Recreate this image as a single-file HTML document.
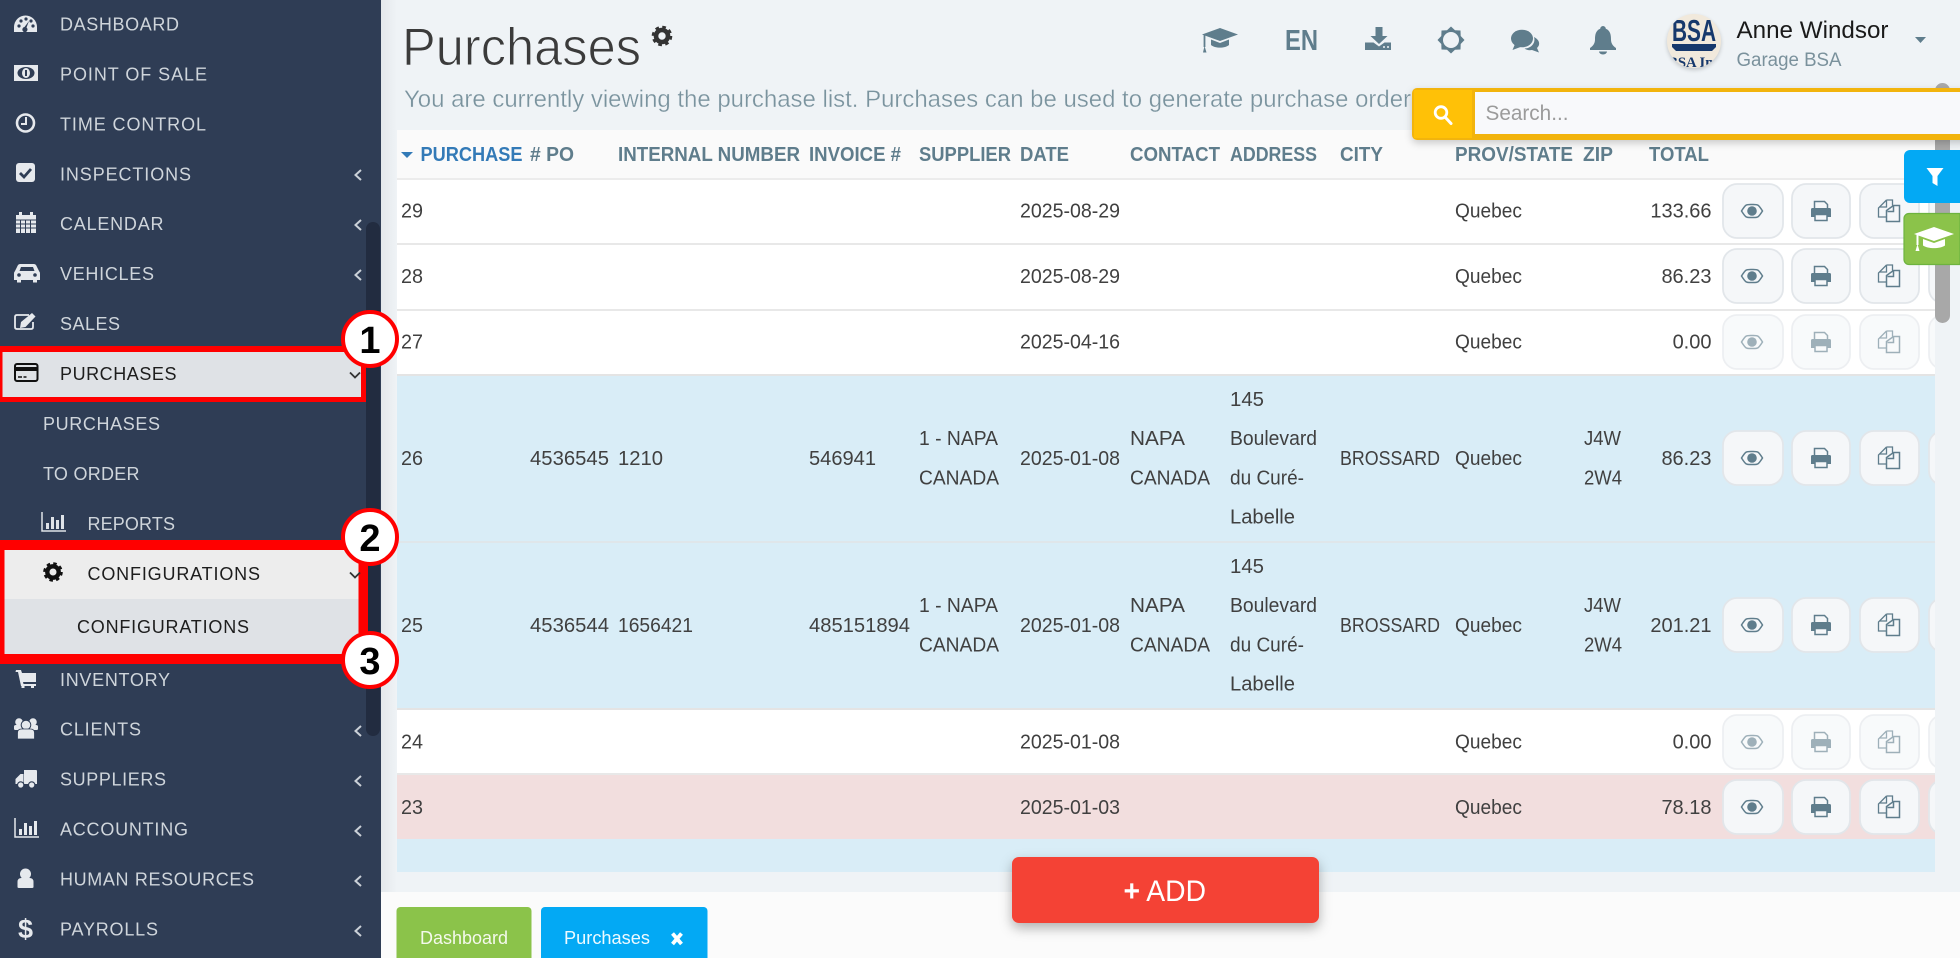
<!DOCTYPE html>
<html lang="en"><head><meta charset="utf-8"><title>Purchases</title>
<style>
html,body{margin:0;padding:0;width:1960px;height:958px;overflow:hidden;background:#eff3f6}
svg{display:block}
text{font-family:"Liberation Sans",sans-serif}
.s{font-size:18px;fill:#cfd5db}
.a{font-size:18px;fill:#1d1d1d}
.h{font-size:20px;font-weight:bold;fill:#5f7d8c}
.d{font-size:20px;fill:#404040}
.n{font-size:38px;font-weight:bold;fill:#000;text-anchor:middle;font-family:"Liberation Sans",sans-serif}
</style></head><body>
<svg xmlns="http://www.w3.org/2000/svg" width="1960" height="958" viewBox="0 0 1960 958">
<defs>
<linearGradient id="sh" x1="0" x2="1" y1="0" y2="0"><stop offset="0" stop-color="#e4e8eb"/><stop offset="1" stop-color="#eff3f6"/></linearGradient>
<filter id="ds" x="-20%" y="-30%" width="140%" height="170%"><feDropShadow dx="0" dy="5" stdDeviation="6" flood-color="#000" flood-opacity=".3"/></filter>
<filter id="ds2" x="-10%" y="-30%" width="120%" height="170%"><feDropShadow dx="0" dy="3" stdDeviation="4" flood-color="#000" flood-opacity=".2"/></filter>
<filter id="ds3" x="-30%" y="-30%" width="160%" height="160%"><feGaussianBlur stdDeviation="2"/></filter>
<clipPath id="av"><circle cx="1694" cy="41" r="27"/></clipPath>
<g id="gear"><circle r="6" fill="none" stroke="currentColor" stroke-width="4.6"/><circle r="8.8" fill="none" stroke="currentColor" stroke-width="3" stroke-dasharray="3.6 3.31"/></g>
<g id="eye"><path d="M-10.500 0C-6-7-6-6.500 0-6.500C6-6.500 6-7 10.500 0C6 7 6 6.500 0 6.500C-6 6.500-6 7-10.500 0Z" fill="none" stroke="currentColor" stroke-width="1.500"/><circle r="4.800" fill="currentColor"/></g>
<g id="prn"><path d="M-6.500-3V-9.500H3.500L6.500-6.500V-3" fill="none" stroke="currentColor" stroke-width="1.500"/><path d="M-8.500-3H8.500Q10-3 10-1.500V6H6.500V3H-6.500V6H-10V-1.500Q-10-3-8.500-3Z" fill="currentColor"/><rect x="-6" y="3.500" width="12" height="6" fill="#f5f7f9" stroke="currentColor" stroke-width="1.500"/></g>
<g id="cpy"><path d="M-2.500-11H3.500V-5.500M-2.500-11L-10.500-3V6H-2.500M-2.500-11V-4H-9" fill="none" stroke="currentColor" stroke-width="1.300"/><path d="M4.500-5.500H10.500V10.500H-2.500V-.5ZM4.500-5.500V.5H-1.500" fill="none" stroke="currentColor" stroke-width="1.500"/></g>
<g id="btns">
<rect x="1723" y="-27" width="60" height="54" rx="14" fill="#f5f7f9" stroke="#e2e6ea" stroke-width="1.800"/>
<rect x="1792" y="-27" width="58" height="54" rx="14" fill="#f5f7f9" stroke="#e2e6ea" stroke-width="1.800"/>
<rect x="1860" y="-27" width="59" height="54" rx="14" fill="#f5f7f9" stroke="#e2e6ea" stroke-width="1.800"/>
<rect x="1929" y="-27" width="60" height="54" rx="14" fill="#f5f7f9" stroke="#e2e6ea" stroke-width="1.800"/>
<use href="#eye" x="1752" y="0" color="#5f7d8c"/><use href="#prn" x="1821" y="0" color="#5f7d8c"/><use href="#cpy" x="1889" y="0" color="#5f7d8c"/>
</g>
<g id="cap"><path d="M0-10L20-3L0 4L-20-3Z" fill="currentColor"/><path d="M-11 2V8.500C-6 12 6 12 11 8.500V2L0 6Z" fill="currentColor"/><path d="M-16.500-2V8" stroke="currentColor" stroke-width="2" fill="none"/><path d="M-16.500 7L-18.500 14H-14.500Z" fill="currentColor"/></g>
<path id="cl" d="M3-5L-2.500 0L3 5" fill="none" stroke="#cbd1d8" stroke-width="2"/>
<g id="bars"><path d="M1-10V9H25" fill="none" stroke="currentColor" stroke-width="1.500"/><path d="M5 1h3V7H5zM10-5h3V7h-3zM15-2h3V7h-3zM20-7h3V7h-3z" fill="currentColor"/></g>
</defs>

<!-- content background -->
<rect x="381" y="0" width="1579" height="958" fill="#eff3f6"/>
<rect x="381" y="0" width="16" height="892" fill="url(#sh)"/>
<rect x="381" y="892" width="1579" height="66" fill="#fbfbfb"/>

<!-- title -->
<text x="402" y="65" font-size="53" fill="#3b3b3b" stroke="#eff3f6" stroke-width="1" textLength="239" lengthAdjust="spacingAndGlyphs">Purchases</text>
<use href="#gear" x="662" y="36" color="#333"/>
<text x="404" y="107" font-size="24" fill="#7a939e" stroke="#eff3f6" stroke-width=".3" textLength="1007" lengthAdjust="spacingAndGlyphs">You are currently viewing the purchase list. Purchases can be used to generate purchase order</text>

<!-- table -->
<rect x="397" y="130" width="1538" height="48" fill="#fafafa"/>
<rect x="397" y="178" width="1538" height="2" fill="#ececec"/>
<rect x="397" y="180" width="1538" height="195" fill="#fff"/>
<rect x="397" y="243" width="1538" height="2" fill="#e8e8e8"/>
<rect x="397" y="309" width="1538" height="2" fill="#e8e8e8"/>
<rect x="397" y="374" width="1538" height="335" fill="#d9edf7"/>
<rect x="397" y="374" width="1538" height="2" fill="#e4e4e4"/>
<rect x="397" y="541" width="1538" height="2" fill="#dfe6ea"/>
<rect x="397" y="708" width="1538" height="2" fill="#e4e4e4"/>
<rect x="397" y="710" width="1538" height="64" fill="#fff"/>
<rect x="397" y="773" width="1538" height="66" fill="#f2dede"/>
<rect x="397" y="773" width="1538" height="2" fill="#e8e8e8"/>
<rect x="397" y="839" width="1538" height="33" fill="#d9edf7"/>

<path d="M401 152H413L407 158Z" fill="#337ab7"/>
<text x="420.500" y="161" class="h" style="fill:#337ab7" textLength="102" lengthAdjust="spacingAndGlyphs">PURCHASE</text>
<text x="530" y="161" class="h" textLength="44" lengthAdjust="spacingAndGlyphs"># PO</text>
<text x="618" y="161" class="h" textLength="182" lengthAdjust="spacingAndGlyphs">INTERNAL NUMBER</text>
<text x="809" y="161" class="h" textLength="92" lengthAdjust="spacingAndGlyphs">INVOICE #</text>
<text x="919" y="161" class="h" textLength="92" lengthAdjust="spacingAndGlyphs">SUPPLIER</text>
<text x="1020" y="161" class="h" textLength="49" lengthAdjust="spacingAndGlyphs">DATE</text>
<text x="1130" y="161" class="h" textLength="90" lengthAdjust="spacingAndGlyphs">CONTACT</text>
<text x="1230" y="161" class="h" textLength="87" lengthAdjust="spacingAndGlyphs">ADDRESS</text>
<text x="1340" y="161" class="h" textLength="43" lengthAdjust="spacingAndGlyphs">CITY</text>
<text x="1455" y="161" class="h" textLength="118" lengthAdjust="spacingAndGlyphs">PROV/STATE</text>
<text x="1583" y="161" class="h" textLength="30" lengthAdjust="spacingAndGlyphs">ZIP</text>
<text x="1649" y="161" class="h" textLength="60" lengthAdjust="spacingAndGlyphs">TOTAL</text>

<!-- rows -->
<g class="rows">
<text x="401" y="217.500" class="d" textLength="22" lengthAdjust="spacingAndGlyphs">29</text>
<text x="1020" y="217.500" class="d" textLength="100" lengthAdjust="spacingAndGlyphs">2025-08-29</text>
<text x="1455" y="217.500" class="d" textLength="67" lengthAdjust="spacingAndGlyphs">Quebec</text>
<text x="1711.500" y="217.500" class="d" text-anchor="end">133.66</text>

<text x="401" y="283" class="d" textLength="22" lengthAdjust="spacingAndGlyphs">28</text>
<text x="1020" y="283" class="d" textLength="100" lengthAdjust="spacingAndGlyphs">2025-08-29</text>
<text x="1455" y="283" class="d" textLength="67" lengthAdjust="spacingAndGlyphs">Quebec</text>
<text x="1711.500" y="283" class="d" text-anchor="end">86.23</text>

<text x="401" y="348.500" class="d" textLength="22" lengthAdjust="spacingAndGlyphs">27</text>
<text x="1020" y="348.500" class="d" textLength="100" lengthAdjust="spacingAndGlyphs">2025-04-16</text>
<text x="1455" y="348.500" class="d" textLength="67" lengthAdjust="spacingAndGlyphs">Quebec</text>
<text x="1711.500" y="348.500" class="d" text-anchor="end">0.00</text>

<text x="401" y="465" class="d" textLength="22" lengthAdjust="spacingAndGlyphs">26</text>
<text x="530" y="465" class="d" textLength="79" lengthAdjust="spacingAndGlyphs">4536545</text>
<text x="618" y="465" class="d" textLength="45" lengthAdjust="spacingAndGlyphs">1210</text>
<text x="809" y="465" class="d" textLength="67" lengthAdjust="spacingAndGlyphs">546941</text>
<text x="919" y="445" class="d" textLength="79" lengthAdjust="spacingAndGlyphs">1 - NAPA</text>
<text x="919" y="484.500" class="d" textLength="80" lengthAdjust="spacingAndGlyphs">CANADA</text>
<text x="1020" y="465" class="d" textLength="100" lengthAdjust="spacingAndGlyphs">2025-01-08</text>
<text x="1130" y="445" class="d" textLength="55" lengthAdjust="spacingAndGlyphs">NAPA</text>
<text x="1130" y="484.500" class="d" textLength="80" lengthAdjust="spacingAndGlyphs">CANADA</text>
<text x="1230" y="406" class="d" textLength="34" lengthAdjust="spacingAndGlyphs">145</text>
<text x="1230" y="445" class="d" textLength="87" lengthAdjust="spacingAndGlyphs">Boulevard</text>
<text x="1230" y="484.500" class="d" textLength="74" lengthAdjust="spacingAndGlyphs">du Curé-</text>
<text x="1230" y="523.500" class="d" textLength="65" lengthAdjust="spacingAndGlyphs">Labelle</text>
<text x="1340" y="465" class="d" textLength="100" lengthAdjust="spacingAndGlyphs">BROSSARD</text>
<text x="1455" y="465" class="d" textLength="67" lengthAdjust="spacingAndGlyphs">Quebec</text>
<text x="1584" y="445" class="d" textLength="37" lengthAdjust="spacingAndGlyphs">J4W</text>
<text x="1584" y="484.500" class="d" textLength="38" lengthAdjust="spacingAndGlyphs">2W4</text>
<text x="1711.500" y="465" class="d" text-anchor="end">86.23</text>

<text x="401" y="632" class="d" textLength="22" lengthAdjust="spacingAndGlyphs">25</text>
<text x="530" y="632" class="d" textLength="79" lengthAdjust="spacingAndGlyphs">4536544</text>
<text x="618" y="632" class="d" textLength="75" lengthAdjust="spacingAndGlyphs">1656421</text>
<text x="809" y="632" class="d" textLength="101" lengthAdjust="spacingAndGlyphs">485151894</text>
<text x="919" y="612" class="d" textLength="79" lengthAdjust="spacingAndGlyphs">1 - NAPA</text>
<text x="919" y="651.500" class="d" textLength="80" lengthAdjust="spacingAndGlyphs">CANADA</text>
<text x="1020" y="632" class="d" textLength="100" lengthAdjust="spacingAndGlyphs">2025-01-08</text>
<text x="1130" y="612" class="d" textLength="55" lengthAdjust="spacingAndGlyphs">NAPA</text>
<text x="1130" y="651.500" class="d" textLength="80" lengthAdjust="spacingAndGlyphs">CANADA</text>
<text x="1230" y="573" class="d" textLength="34" lengthAdjust="spacingAndGlyphs">145</text>
<text x="1230" y="612" class="d" textLength="87" lengthAdjust="spacingAndGlyphs">Boulevard</text>
<text x="1230" y="651.500" class="d" textLength="74" lengthAdjust="spacingAndGlyphs">du Curé-</text>
<text x="1230" y="690.500" class="d" textLength="65" lengthAdjust="spacingAndGlyphs">Labelle</text>
<text x="1340" y="632" class="d" textLength="100" lengthAdjust="spacingAndGlyphs">BROSSARD</text>
<text x="1455" y="632" class="d" textLength="67" lengthAdjust="spacingAndGlyphs">Quebec</text>
<text x="1584" y="612" class="d" textLength="37" lengthAdjust="spacingAndGlyphs">J4W</text>
<text x="1584" y="651.500" class="d" textLength="38" lengthAdjust="spacingAndGlyphs">2W4</text>
<text x="1711.500" y="632" class="d" text-anchor="end">201.21</text>

<text x="401" y="748.500" class="d" textLength="22" lengthAdjust="spacingAndGlyphs">24</text>
<text x="1020" y="748.500" class="d" textLength="100" lengthAdjust="spacingAndGlyphs">2025-01-08</text>
<text x="1455" y="748.500" class="d" textLength="67" lengthAdjust="spacingAndGlyphs">Quebec</text>
<text x="1711.500" y="748.500" class="d" text-anchor="end">0.00</text>

<text x="401" y="814" class="d" textLength="22" lengthAdjust="spacingAndGlyphs">23</text>
<text x="1020" y="814" class="d" textLength="100" lengthAdjust="spacingAndGlyphs">2025-01-03</text>
<text x="1455" y="814" class="d" textLength="67" lengthAdjust="spacingAndGlyphs">Quebec</text>
<text x="1711.500" y="814" class="d" text-anchor="end">78.18</text>
<text x="1230" y="871" class="d" textLength="34" lengthAdjust="spacingAndGlyphs">145</text>
</g>

<!-- row buttons -->
<use href="#btns" x="0" y="211"/>
<use href="#btns" x="0" y="276"/>
<use href="#btns" x="0" y="342" opacity=".6"/>
<use href="#btns" x="0" y="458"/>
<use href="#btns" x="0" y="625"/>
<use href="#btns" x="0" y="742" opacity=".6"/>
<use href="#btns" x="0" y="807"/>

<!-- right edge -->
<rect x="1935" y="130" width="25" height="762" fill="#eff3f6"/>
<rect x="1935" y="83" width="15" height="240" rx="7.500" fill="#a8a8a8"/>

<!-- top bar icons -->
<g fill="#5f7d8c">
<path d="M1220 28L1238 34.500L1220 41L1202 34.500Z"/>
<path d="M1211 39.500V45C1215 48.500 1225 48.500 1229 45V39.500L1220 43Z"/>
<path d="M1204.500 35V47" stroke="#5f7d8c" stroke-width="1.800" fill="none"/>
<path d="M1204.500 46L1203 52.500H1206.500Z"/>
</g>
<text x="1285" y="50" font-size="29" font-weight="bold" fill="#5f7d8c" textLength="33" lengthAdjust="spacingAndGlyphs">EN</text>
<g fill="#5f7d8c"><path d="M1375.500 27h7v9h5l-8.500 8-8.500-8h5z"/><path d="M1365 42.500h8.500l5.500 4 5.500-4H1391v7.500h-26z"/><circle cx="1384" cy="47" r="1" fill="#eff3f6"/><circle cx="1388" cy="47" r="1" fill="#eff3f6"/></g>
<path d="M1451 26.500L1455 30.300L1460.500 30.500L1460.700 36L1464.500 40L1460.700 44L1460.500 49.500L1455 49.700L1451 53.500L1447 49.700L1441.500 49.500L1441.300 44L1437.500 40L1441.300 36L1441.500 30.500L1447 30.300Z" fill="#5f7d8c"/>
<circle cx="1451" cy="40" r="8" fill="#eff3f6"/>
<g fill="#5f7d8c"><ellipse cx="1522" cy="38.500" rx="11" ry="8.800"/><path d="M1515 44l-2.500 6 8-3z"/><path d="M1534 37c6 3 6.500 8 3 11l2 4.500-7-2.500c-3 .5-5.500 0-7.500-1.500 6.500 0 11.500-5.500 9.500-11.500z"/></g>
<path d="M1603 26a2.800 2.800 0 0 1 2.800 2.800c4.700 1.700 5.200 6.700 5.200 10.700 0 4 2 6.500 5 8.500v2h-26v-2c3-2 5-4.500 5-8.500 0-4 .5-9 5.200-10.700a2.800 2.800 0 0 1 2.800-2.800zM1599 51.500h8a4 3 0 0 1-8 0z" fill="#5f7d8c"/>

<!-- avatar -->
<circle cx="1694" cy="43" r="27" fill="#000" opacity=".18" filter="url(#ds3)"/>
<g clip-path="url(#av)">
<rect x="1665" y="12" width="60" height="60" fill="#f1e9dc"/>
<text x="1672" y="41" font-size="31" font-weight="bold" fill="#16386c" textLength="44" lengthAdjust="spacingAndGlyphs">BSA</text>
<path d="M1672 44h44v3l-4 4h-36l-4-4z" fill="#16386c"/>
<text x="1668" y="67" font-size="15" font-weight="bold" fill="#16386c" style="font-family:'Liberation Serif',serif" textLength="52" lengthAdjust="spacingAndGlyphs">BSA Inc</text>
</g>
<text x="1736.500" y="38" font-size="24" fill="#1a1a1a" textLength="152" lengthAdjust="spacingAndGlyphs">Anne Windsor</text>
<text x="1736.500" y="66" font-size="19" fill="#7a919c" textLength="105" lengthAdjust="spacingAndGlyphs">Garage BSA</text>
<path d="M1915 37h11l-5.500 6z" fill="#5f7d8c"/>

<!-- search -->
<rect x="1412" y="88" width="560" height="52" rx="5" fill="#f2b40e" filter="url(#ds2)"/>
<rect x="1414" y="90" width="58" height="48" fill="#ffc107"/>
<rect x="1475" y="92" width="490" height="42" fill="#f8f9fb"/>
<circle cx="1441" cy="112.500" r="5.800" fill="none" stroke="#fff" stroke-width="2.800"/>
<path d="M1445 117l6 6.500" stroke="#fff" stroke-width="3" stroke-linecap="round"/>
<text x="1485.500" y="120" font-size="21" fill="#9b9b9b" textLength="83" lengthAdjust="spacingAndGlyphs">Search...</text>

<!-- floating tabs -->
<path d="M1960 150H1910a6 6 0 0 0-6 6v41a6 6 0 0 0 6 6h50z" fill="#03a9f4"/>
<path d="M1926.500 168h17l-6 8v10l-5-3v-7z" fill="#fff"/>
<path d="M1960 213.500H1909a5 5 0 0 0-5 5v41a5 5 0 0 0 5 5h51z" fill="#8bc34a" stroke="#6db33f" stroke-width="1.200"/>
<use href="#cap" x="1934" y="237" color="#fff"/>

<!-- bottom tabs -->
<path d="M396.500 958V911a4 4 0 0 1 4-4H527.500a4 4 0 0 1 4 4V958z" fill="#8bc34a"/>
<text x="420" y="944" font-size="18" fill="#f4f9ec" textLength="88" lengthAdjust="spacingAndGlyphs">Dashboard</text>
<path d="M541 958V911a4 4 0 0 1 4-4H703.500a4 4 0 0 1 4 4V958z" fill="#03a9f4"/>
<text x="564" y="944" font-size="18" fill="#eefaff" textLength="86" lengthAdjust="spacingAndGlyphs">Purchases</text>
<path d="M672.500 933.500l9 10.500M681.500 933.500l-9 10.500" stroke="#fff" stroke-width="3.800"/>

<!-- add -->
<rect x="1012" y="857" width="307" height="66" rx="7" fill="#f44336" filter="url(#ds)"/>
<text x="1123.500" y="901" font-size="30" fill="#fff" textLength="82.500" lengthAdjust="spacingAndGlyphs"><tspan font-weight="bold">+</tspan> ADD</text>

<!-- sidebar -->
<rect x="0" y="0" width="381" height="958" fill="#2f3d55"/>
<rect x="366" y="222" width="14" height="514" rx="7" fill="#222c40"/>

<g color="#e6e9ed">
<path d="M14 32v-5a11.500 11.500 0 0 1 23 0v5z" fill="#e6e9ed"/>
<g fill="#2f3d55"><circle cx="19" cy="26" r="1.600"/><circle cx="21" cy="21" r="1.600"/><circle cx="26" cy="19" r="1.600"/><circle cx="31" cy="21" r="1.600"/><circle cx="33" cy="26" r="1.600"/><path d="M29 21l-2.500 6.500a2.600 2.600 0 1 1-2-.5z"/></g>
<rect x="14" y="65" width="24" height="16" fill="#e6e9ed"/><ellipse cx="26" cy="73" rx="8.500" ry="6" fill="#2f3d55"/><ellipse cx="26" cy="73" rx="4" ry="5" fill="#e6e9ed"/><rect x="25" y="70" width="2" height="6" fill="#2f3d55"/>
<circle cx="25.500" cy="123" r="8.500" fill="none" stroke="#e6e9ed" stroke-width="2.600"/><path d="M26 117v7h-5" fill="none" stroke="#e6e9ed" stroke-width="2"/>
<rect x="16" y="163" width="19" height="19" rx="3" fill="#e6e9ed"/><path d="M20 173l4 4 7-8" fill="none" stroke="#2f3d55" stroke-width="2.800"/>
<rect x="16" y="215" width="20" height="18" fill="#e6e9ed"/><path d="M16 220h20M16 224h20M16 228h20M20.500 220v13M25.500 220v13M30.500 220v13" stroke="#2f3d55" stroke-width="1"/><rect x="19" y="212" width="3" height="6" fill="#e6e9ed"/><rect x="30" y="212" width="3" height="6" fill="#e6e9ed"/>
<path d="M20 264h14q2 0 3 3l2 4q1 1 1 3v6h-3v2.500h-4V280h-12v2.500h-4V280h-3v-6q0-2 1-3l2-4q1-3 3-3z" fill="#e6e9ed"/><path d="M21 267h12l1.500 4h-15z" fill="#2f3d55"/><circle cx="19" cy="275" r="1.800" fill="#2f3d55"/><circle cx="35" cy="275" r="1.800" fill="#2f3d55"/>
<path d="M29 315h-12q-2 0-2 2v10q0 2 2 2h14q2 0 2-2v-5" fill="none" stroke="#e6e9ed" stroke-width="1.800"/><path d="M21 322l11-9 3.500 3.500-10 10.500-5.500 1z" fill="#e6e9ed"/>
<use href="#bars" x="41" y="522" color="#dfe3e8"/>
<path d="M16 670h5l1 3h14v9h-13l.5 2h12.500v2h-15l-3-14h-2.500z" fill="#e6e9ed"/><rect x="21.500" y="685" width="3" height="3" fill="#e6e9ed"/><rect x="31" y="685" width="3" height="3" fill="#e6e9ed"/>
<g fill="#e6e9ed"><circle cx="19" cy="722" r="3.800"/><circle cx="33" cy="722" r="3.800"/><path d="M14 729v-2.500q0-1.500 2-1.500h5l2 5h-7q-2 0-2-1zM38 729v-2.500q0-1.500-2-1.500h-5l-2 5h7q2 0 2-1z"/><circle cx="26" cy="725" r="4.800" stroke="#2f3d55" stroke-width="1"/><path d="M17.500 739v-6q0-4 4-4h9q4 0 4 4v6z" stroke="#2f3d55" stroke-width=".8"/></g>
<g fill="#e6e9ed"><path d="M24 770h12q1 0 1 1v13h-13z"/><path d="M15.500 784v-5l5-5h3v10z"/><circle cx="20.700" cy="785" r="3.200" stroke="#2f3d55" stroke-width="1.200"/><circle cx="31.700" cy="785" r="3.200" stroke="#2f3d55" stroke-width="1.200"/></g>
<use href="#bars" x="14" y="828" color="#e6e9ed"/>
<g fill="#e6e9ed"><circle cx="25.500" cy="874" r="5.500"/><path d="M17.500 887v-5q0-4 4-4h8q4 0 4 4v5q0 1-2 1h-12q-2 0-2-1z"/></g>
<text x="25.500" y="938" font-size="27" font-weight="bold" fill="#e6e9ed" text-anchor="middle">$</text>
</g>

<text x="60" y="30.500" class="s" textLength="119">DASHBOARD</text>
<text x="60" y="80.500" class="s" textLength="147">POINT OF SALE</text>
<text x="60" y="130.500" class="s" textLength="146">TIME CONTROL</text>
<text x="60" y="180.500" class="s" textLength="131">INSPECTIONS</text>
<text x="60" y="230" class="s" textLength="103.500">CALENDAR</text>
<text x="60" y="280" class="s" textLength="94">VEHICLES</text>
<text x="60" y="330" class="s" textLength="60">SALES</text>
<text x="43" y="430" class="s" textLength="117">PURCHASES</text>
<text x="43" y="480" class="s" textLength="96.500">TO ORDER</text>
<text x="87.500" y="530" class="s" textLength="87.500">REPORTS</text>
<text x="60" y="686" class="s" textLength="110">INVENTORY</text>
<text x="60" y="735.500" class="s" textLength="81">CLIENTS</text>
<text x="60" y="785.500" class="s" textLength="106">SUPPLIERS</text>
<text x="60" y="835.500" class="s" textLength="128">ACCOUNTING</text>
<text x="60" y="885.500" class="s" textLength="194">HUMAN RESOURCES</text>
<text x="60" y="935.500" class="s" textLength="98">PAYROLLS</text>

<use href="#cl" x="358" y="175"/><use href="#cl" x="358" y="225"/><use href="#cl" x="358" y="275"/>
<use href="#cl" x="358" y="731"/><use href="#cl" x="358" y="781"/><use href="#cl" x="358" y="831"/><use href="#cl" x="358" y="881"/><use href="#cl" x="358" y="931"/>

<!-- highlight 1 -->
<rect x="0" y="346" width="366" height="56" fill="#ff0000"/>
<rect x="2.500" y="352" width="358.500" height="45" fill="#dfe2e6"/>
<g color="#000"><rect x="15" y="364" width="22.500" height="17" rx="2" fill="none" stroke="#111" stroke-width="2"/><rect x="15" y="367" width="22.500" height="4" fill="#111"/><path d="M18 377h4M23.500 377h3" stroke="#111" stroke-width="1.500"/></g>
<text x="60" y="380" class="a" textLength="116.500">PURCHASES</text>
<path d="M350 372.500l5 5 5-5" fill="none" stroke="#333" stroke-width="1.800"/>

<!-- highlight 2/3 -->
<rect x="0" y="540" width="368" height="124" fill="#ff0000"/>
<rect x="4.500" y="550" width="354" height="49" fill="#ededed"/>
<rect x="4.500" y="599" width="354" height="55" fill="#dfe2e6"/>
<use href="#gear" x="53" y="572" color="#111" transform="translate(53 572) scale(.95) translate(-53 -572)"/>
<text x="87.500" y="580" class="a" textLength="172.500">CONFIGURATIONS</text>
<path d="M350 572.500l5 5 5-5" fill="none" stroke="#333" stroke-width="1.800"/>
<text x="77" y="633" class="a" textLength="172">CONFIGURATIONS</text>

<!-- numbered callouts -->
<circle cx="370" cy="339" r="27" fill="#fff" stroke="#ff0000" stroke-width="4"/>
<text x="370" y="353" class="n">1</text>
<circle cx="370" cy="537" r="27" fill="#fff" stroke="#ff0000" stroke-width="4"/>
<text x="370" y="551" class="n">2</text>
<circle cx="370" cy="660" r="27" fill="#fff" stroke="#ff0000" stroke-width="4"/>
<text x="370" y="674" class="n">3</text>
</svg>
</body></html>
